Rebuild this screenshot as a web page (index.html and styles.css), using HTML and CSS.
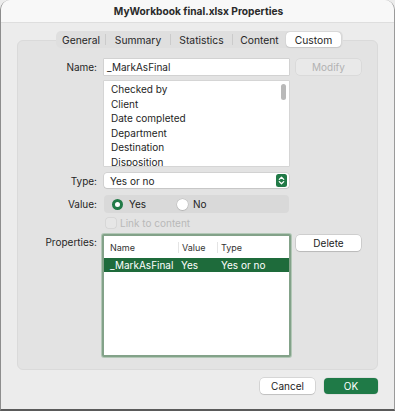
FILE: index.html
```html
<!DOCTYPE html>
<html>
<head>
<meta charset="utf-8">
<link rel="stylesheet" href="styles.css">
</head>
<body>
<div class="window">
  <div class="titlebar">MyWorkbook final.xlsx Properties</div>
  <div class="content">
    <div class="tabs">
      <span class="tab">General</span>
      <span class="sep"></span>
      <span class="tab">Summary</span>
      <span class="sep"></span>
      <span class="tab">Statistics</span>
      <span class="sep"></span>
      <span class="tab">Content</span>
      <span class="tab active">Custom</span>
    </div>
    <div class="panel">
      <div class="row row-name">
        <span class="lbl">Name:</span>
        <div class="input">_MarkAsFinal</div>
        <span class="btn disabled">Modify</span>
      </div>
      <div class="row row-list">
        <span></span>
        <div class="listbox">
          <div class="item">Checked by</div>
          <div class="item">Client</div>
          <div class="item">Date completed</div>
          <div class="item">Department</div>
          <div class="item">Destination</div>
          <div class="item">Disposition</div>
          <div class="thumb"></div>
        </div>
      </div>
      <div class="row row-type">
        <span class="lbl">Type:</span>
        <div class="popup">
          <span>Yes or no</span>
          <span class="stepper">
            <svg width="11" height="13" viewBox="0 0 11 13">
              <rect x="0" y="0" width="11" height="13" rx="2.5" fill="#217a47"/>
              <path d="M3.3 5.4 L5.5 3.3 L7.7 5.4" fill="none" stroke="#fff" stroke-width="1.3" stroke-linecap="round" stroke-linejoin="round"/>
              <path d="M3.3 7.6 L5.5 9.7 L7.7 7.6" fill="none" stroke="#fff" stroke-width="1.3" stroke-linecap="round" stroke-linejoin="round"/>
            </svg>
          </span>
        </div>
      </div>
      <div class="row row-value">
        <span class="lbl">Value:</span>
        <div class="radios">
          <span class="radio on"></span><span class="rtext">Yes</span>
          <span class="radio off"></span><span class="rtext">No</span>
        </div>
      </div>
      <div class="row row-link">
        <span></span>
        <div class="check">
          <span class="box"></span><span class="ctext">Link to content</span>
        </div>
      </div>
      <div class="row row-props">
        <span class="lbl">Properties:</span>
        <div class="table">
          <div class="thead">
            <span class="c1">Name</span>
            <span class="c2">Value</span>
            <span class="c3">Type</span>
          </div>
          <div class="trow selected">
            <span class="c1">_MarkAsFinal</span>
            <span class="c2">Yes</span>
            <span class="c3">Yes or no</span>
          </div>
        </div>
        <span class="btn">Delete</span>
      </div>
    </div>
    <div class="footer">
      <span class="btn cancel">Cancel</span>
      <span class="btn ok">OK</span>
    </div>
  </div>
</div>
</body>
</html>
```

FILE: styles.css
```css
* { box-sizing: border-box; }
html, body { margin: 0; padding: 0; }
body {
  width: 395px;
  height: 411px;
  background: #ececec;
  font-family: Inter, "Liberation Sans", sans-serif;
  font-size: 10px;
  color: #1e1e1e;
  overflow: hidden;
}
.window {
  width: 395px;
  height: 411px;
  background: #ececec;
  border-left: 1px solid #8d8d8d;
  border-right: 1px solid #9a9a9a;
  border-bottom: 2px solid #5a5a5a;
  border-top-right-radius: 10px;
  border-top-left-radius: 10px;
  overflow: hidden;
}
.titlebar {
  height: 23px;
  background: #f8f8f8;
  border-bottom: 1px solid #dedede;
  display: flex;
  align-items: center;
  justify-content: center;
  font-weight: 700;
  font-size: 10.2px;
  color: #2a2a2a;
  padding-left: 2px;
}
.content {
  padding: 8px 15px 0 16px;
}
.tabs {
  width: 287px;
  height: 17px;
  margin: 0 auto 0 39px;
  background: #dfdfdf;
  border-radius: 5px;
  display: flex;
  align-items: center;
  position: relative;
  z-index: 1;
  padding: 1px;
  font-size: 10.3px;
}
.tab {
  height: 15px;
  display: flex;
  align-items: center;
  justify-content: center;
  color: #262626;
  padding: 0 7px;
}
.tab:nth-child(1) { width: 48px; }
.tab:nth-child(3) { width: 64px; }
.tab:nth-child(5) { width: 61px; }
.tab:nth-child(7) { width: 53px; }
.tab.active {
  width: 55px;
  background: #fff;
  border-radius: 4px;
  box-shadow: 0 0 1px rgba(0,0,0,0.25), 0 1px 1px rgba(0,0,0,0.08);
}
.sep {
  width: 1px;
  height: 11px;
  background: #cbcbcb;
}
.panel {
  width: 361px;
  height: 330px;
  margin-top: -8px;
  background: #e3e3e3;
  border: 1px solid #dadada;
  border-radius: 6px;
  padding-top: 18px;
}
.row {
  display: grid;
  grid-template-columns: 79px 185px 65px;
  column-gap: 7px;
  align-items: center;
}
.lbl {
  text-align: right;
  color: #262626;
}
.row-name { height: 16px; }
.input {
  height: 16px;
  background: #fff;
  display: flex;
  align-items: center;
  padding-left: 3px;
  box-shadow: 0 0 0 0.5px rgba(0,0,0,0.15);
}
.btn {
  height: 16px;
  background: #fff;
  border-radius: 4px;
  display: flex;
  align-items: center;
  justify-content: center;
  box-shadow: 0 0 0 0.5px rgba(0,0,0,0.18), 0 1px 1px rgba(0,0,0,0.1);
  color: #222;
}
.btn.disabled {
  background: #e9e9e9;
  color: #b2b2b2;
  box-shadow: 0 0 0 0.5px rgba(0,0,0,0.08);
}
.row-list { margin-top: 6px; }
.listbox {
  height: 85px;
  background: #fff;
  position: relative;
  overflow: hidden;
  padding-top: 1px;
  box-shadow: 0 0 0 0.5px rgba(0,0,0,0.12);
}
.item {
  height: 14.6px;
  line-height: 14.6px;
  padding-left: 7px;
}
.thumb {
  position: absolute;
  left: 177px;
  top: 3px;
  width: 5px;
  height: 16px;
  border-radius: 3px;
  background: #b9b9b9;
}
.row-type { margin-top: 7px; }
.popup {
  height: 15px;
  background: #fff;
  border-radius: 3px;
  display: flex;
  align-items: center;
  justify-content: space-between;
  padding: 0 2px 0 6px;
  box-shadow: 0 0 0 0.5px rgba(0,0,0,0.15), 0 1px 1px rgba(0,0,0,0.06);
}
.stepper { display: flex; }
.stepper svg { display: block; }
.row-value { margin-top: 7px; }
.radios {
  height: 18px;
  background: #d9d9d9;
  border-radius: 4px;
  display: flex;
  align-items: center;
  padding-left: 8px;
}
.radio {
  width: 11px;
  height: 11px;
  border-radius: 50%;
  flex: none;
}
.radio.on {
  border: 3px solid #217a47;
  background: #fff;
}
.radio.off {
  background: #fff;
  box-shadow: 0 0 0 0.5px rgba(0,0,0,0.15), 0 1px 1px rgba(0,0,0,0.1);
  margin-left: 0;
}
.rtext { margin-left: 6px; width: 48px; }
.rtext:last-child { margin-left: 5px; }
.row-link { margin-top: 4px; }
.check {
  display: flex;
  align-items: center;
  height: 11px;
}
.box {
  width: 10px;
  height: 10px;
  margin-left: 2px;
  border-radius: 2px;
  background: #e6e6e6;
  box-shadow: 0 0 0 0.5px rgba(0,0,0,0.1);
}
.ctext {
  margin-left: 4px;
  color: #b9b9b9;
}
.row-props {
  margin-top: 6px;
  align-items: start;
}
.row-props .lbl { margin-top: 2px; }
.row-props .btn { margin-top: 1px; }
.table {
  height: 123px;
  margin: 0 -2px;
  background: #fff;
  border: 2px solid #83a289;
  box-shadow: 0 0 0 1px #b3c8b7;
  border-radius: 2px;
  padding-top: 1px;
}
.thead, .trow {
  display: grid;
  grid-template-columns: 74px 39px 1fr;
  align-items: center;
}
.thead {
  height: 20px;
  font-size: 9px;
  color: #333;
}
.thead span { padding-left: 6px; }
.thead .c2, .thead .c3 {
  border-left: 1px solid #e4e4e4;
  padding-left: 3px;
}
.trow {
  height: 14px;
  margin-top: 1px;
}
.trow span { padding-left: 6px; }
.trow .c2 { padding-left: 3px; }
.trow .c3 { padding-left: 4px; }
.trow.selected {
  background: #1e6b3b;
  color: #fff;
}
.footer {
  display: flex;
  justify-content: flex-end;
  gap: 9px;
  margin-top: 8px;
  padding-right: 1px;
}
.footer .btn { height: 16px; }
.btn.cancel { width: 55px; }
.btn.ok {
  width: 54px;
  background: #1f7a47;
  color: #fff;
  box-shadow: 0 0 0 0.5px rgba(0,0,0,0.1);
}
```
